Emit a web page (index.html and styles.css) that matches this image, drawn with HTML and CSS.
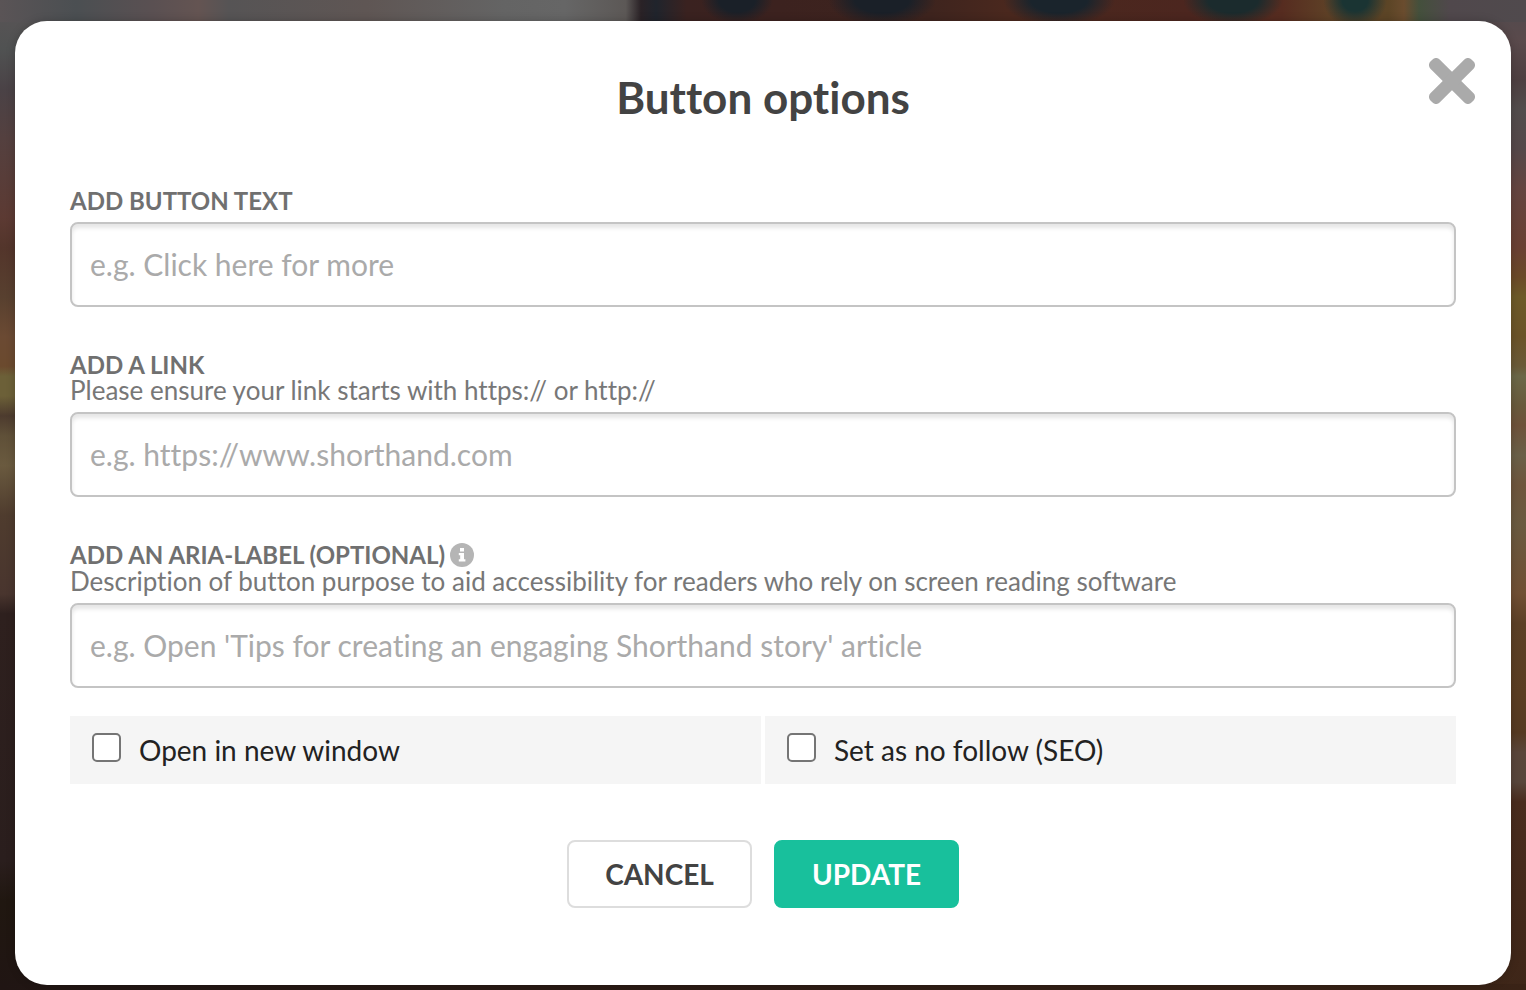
FILE: index.html
```html
<!DOCTYPE html>
<html lang="en">
<head>
  <meta charset="UTF-8">
  <title>Button options</title>
  <meta name="viewport" content="width=device-width, initial-scale=1.0">
  <link rel="stylesheet" href="styles.css">
</head>
<body>

  <div class="modal" role="dialog" aria-labelledby="modalTitle">
    <button type="button" class="close-btn" aria-label="Close">
      <svg viewBox="0 0 46 46" width="46" height="46" fill="#aaa">
        <rect x="-6" y="16.500" width="58" height="13" rx="5" transform="rotate(45 23 23)"/>
        <rect x="-6" y="16.500" width="58" height="13" rx="5" transform="rotate(-45 23 23)"/>
      </svg>
    </button>

    <h1 class="modal-title" id="modalTitle">Button options</h1>

    <form>
      <div class="field">
        <label class="field-label" for="buttonText">Add button text</label>
        <input class="text-input" id="buttonText" type="text" placeholder="e.g. Click here for more">
      </div>

      <div class="field">
        <label class="field-label" for="buttonLink">Add a link</label>
        <p class="hint" id="linkHint">Please ensure your link starts with https:// or http://</p>
        <input class="text-input" id="buttonLink" type="url" placeholder="e.g. https://www.shorthand.com" aria-describedby="linkHint">
      </div>

      <div class="field">
        <div class="label-row">
          <label class="field-label" for="ariaLabel">Add an aria-label (optional)</label>
          <svg class="info-icon" viewBox="0 0 24 24" width="24" height="24">
            <circle cx="12" cy="12" r="12" fill="#b5b5b5"/>
            <path d="M10 5h4v3.500h-4z M8.800 10h5.200v6.200h1.400v2.200H8.800v-2.200h1.400v-4H8.800z" fill="#fff"/>
          </svg>
        </div>
        <p class="hint" id="ariaHint">Description of button purpose to aid accessibility for readers who rely on screen reading software</p>
        <input class="text-input" id="ariaLabel" type="text" placeholder="e.g. Open 'Tips for creating an engaging Shorthand story' article" aria-describedby="ariaHint">
      </div>

      <div class="check-row">
        <label class="check"><input type="checkbox" name="newWindow"><span>Open in new window</span></label>
        <label class="check"><input type="checkbox" name="noFollow"><span>Set as no follow (SEO)</span></label>
      </div>

      <div class="actions">
        <button type="button" class="btn">Cancel</button>
        <button type="submit" class="btn btn-primary">Update</button>
      </div>
    </form>
  </div>

</body>
</html>
```
FILE: styles.css
```css
* {
  box-sizing: border-box;
}

body {
  font-family: Lato, "Open Sans", sans-serif;
  font-variant-ligatures: none;
  margin: 0;
  padding: 21px 15px 5px;
  min-height: 100vh;
  background-color: #2a1e1d;
  /* blurred photo behind the dialog: dark scallops, top edge, bottom edge, left side, right side */
  background-image:
    radial-gradient(ellipse 36px 24px at 48.3% 0, #1a2028 50%, transparent),
    radial-gradient(ellipse 54px 26px at 57.8% 0, #1a2028 50%, transparent),
    radial-gradient(ellipse 56px 26px at 69.4% 0, #1a242c 50%, transparent),
    radial-gradient(ellipse 50px 26px at 80.8% 0, #1b2b2d 50%, transparent),
    radial-gradient(ellipse 32px 28px at 88.8% 0, #1a3433 40%, transparent),
    linear-gradient(90deg, #5a5456 0, #4b4f52 5%, #5a5052 10%, #645452 13%, #565455 15%, #5f5654 24%, #646464 33%, #666 37%, #5c5856 41%, #2a2226 42%, #20242c 43%, #3a2220 45%, #3c221f 51%, #3e241e 61%, #4a281e 66%, #4c261f 78%, #562c20 84%, #5e4026 87%, #5c4526 91%, #6a4c2e 92%, #44503c 93%, #50484c 95%, #504a4d 100%),
    linear-gradient(90deg, #201513, #3a2316),
    linear-gradient(#5a5456 0, #505252 5%, #4a4246 9%, #54403f 14%, #5c3a33 22%, #53352b 25%, #58402f 30%, #6b4a33 34%, #6b4a2e 37%, #6c6038 38%, #6c6038 40%, #4d3b2e 42%, #5f5038 44%, #6a5a3f 47%, #4f3c2e 52%, #49352e 60%, #2e201e 62%, #2a1e1d 87%, #201710 91%, #201513 100%),
    linear-gradient(#504a4d 0, #5a4a4c 4%, #4e3f41 8%, #524c4c 11%, #55484a 15%, #644440 19%, #6a4033 25%, #6b4a28 28%, #6d5a28 30%, #6b5328 34%, #6a5a38 37%, #6b6848 38%, #695a3c 41%, #6e523a 43%, #6a6048 46%, #6e553c 49%, #6a5a40 53%, #704f33 60%, #5c4026 63%, #5a3d22 70%, #563a22 74%, #5a463a 76%, #58463b 79%, #4a2c1e 81%, #3e2618 100%);
  background-repeat: no-repeat;
  background-size: 100% 22px, 100% 22px, 100% 22px, 100% 22px, 100% 22px, 100% 22px, 100% 6px, 50% 100%, 50% 100%;
  background-position: top, top, top, top, top, top, bottom, left, right;
}

.modal {
  position: relative;
  background: white;
  border-radius: 32px;
  padding: 49px 55px 77px;
  box-shadow: 0 0 10px rgba(0,0,0,0.2);
}

.close-btn {
  position: absolute;
  top: 37px;
  right: 36px;
  padding: 0;
  border: none;
  background: none;
  cursor: pointer;
}

.close-btn svg {
  display: block;
}

.modal-title {
  margin: 0 0 65px;
  color: #434343;
  font-size: 44px;
  line-height: 54px;
  text-align: center;
}

.field {
  display: flex;
  flex-direction: column;
  margin-bottom: 46px;
}

.field-label {
  color: #707070;
  font-size: 24px;
  font-weight: bold;
  line-height: 24px;
  text-transform: uppercase;
}

.label-row {
  display: flex;
  gap: 5px;
  height: 25px;
}

.hint {
  margin: 0;
  color: #777;
  font-size: 26px;
  line-height: 26px;
}

.text-input {
  width: 100%;
  height: 85px;
  margin-top: 9px;
  padding: 0 18px 2px;
  border: 2px solid #c4c4c4;
  border-radius: 8px;
  box-shadow: inset 0 4px 4px rgba(0,0,0,0.1);
  color: #222;
  font-family: inherit;
  font-size: 30px;
  font-variant-ligatures: none;
}

.text-input::placeholder {
  color: #aaa;
}

.check-row {
  display: grid;
  grid-template-columns: 1fr 1fr;
  gap: 4px;
  margin: -18px 0 56px;
}

.check {
  display: flex;
  gap: 18px;
  height: 68px;
  padding: 17px 22px;
  background: #f5f5f5;
  color: #222;
  font-size: 28px;
  line-height: 34px;
  cursor: pointer;
}

.check input {
  appearance: none;
  width: 29px;
  height: 29px;
  margin: 0;
  border: 2px solid #757575;
  border-radius: 5px;
  background: white;
}

.check input:checked {
  background: #18c09c;
}

.actions {
  display: flex;
  justify-content: center;
  gap: 22px;
}

.btn {
  min-width: 185px;
  height: 68px;
  padding: 0 34px;
  border: 2px solid #ddd;
  border-radius: 8px;
  background: white;
  color: #434343;
  font-family: inherit;
  font-size: 28px;
  font-weight: bold;
  text-transform: uppercase;
  cursor: pointer;
}

.btn-primary {
  border-color: #18c09c;
  background: #18c09c;
  color: white;
}
```
